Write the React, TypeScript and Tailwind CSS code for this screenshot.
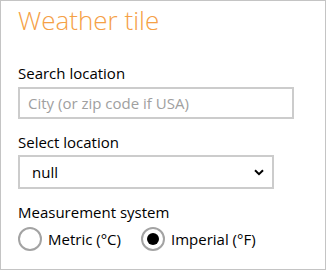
import React from 'react';

const font = "font-['Open_Sans','Noto_Sans',sans-serif]";

function Radio({ checked, label }: { checked?: boolean; label: string }) {
  return (
    <label className="flex items-center gap-[6px]">
      <span className="flex h-[24px] w-[24px] items-center justify-center rounded-full border-[2px] border-[#a3a3a3] bg-white">
        {checked && <span className="h-[12px] w-[12px] rounded-full bg-black" />}
      </span>
      <span className="text-[15px] leading-[20px] text-black">{label}</span>
    </label>
  );
}

export default function App() {
  return (
    <div className={`h-[270px] w-[326px] border border-[#c4c4c4] bg-white pl-[17px] ${font}`}>
      <div className="pt-[1px] text-[26px] font-light leading-[36px] text-[#f5a045]">Weather tile</div>

      <div className="mt-[25px] text-[15px] leading-[20px] text-black">Search location</div>
      <input
        className="mt-[4px] h-[32px] w-[276px] border-[2px] border-[#cccccc] px-[8px] text-[15px] text-black outline-none placeholder:text-[#a0a0a0]"
        placeholder="City (or zip code if USA)"
      />

      <div className="mt-[13px] text-[15px] leading-[20px] text-black">Select location</div>
      <div className="mt-[3px] flex h-[34px] w-[256px] items-center justify-between border-[2px] border-[#cccccc] pl-[12px] pr-[8px]">
        <span className="text-[15px] leading-[20px] text-black">null</span>
        <svg width="10" height="7" viewBox="0 0 10 7" fill="none">
          <path d="M1 1.2 L5 5.2 L9 1.2" stroke="#000" strokeWidth="2" />
        </svg>
      </div>

      <div className="mt-[13px] text-[15px] leading-[20px] text-black">Measurement system</div>
      <div className="mt-[5px] flex items-center gap-[20px]">
        <Radio label="Metric (°C)" />
        <Radio checked label="Imperial (°F)" />
      </div>
    </div>
  );
}
